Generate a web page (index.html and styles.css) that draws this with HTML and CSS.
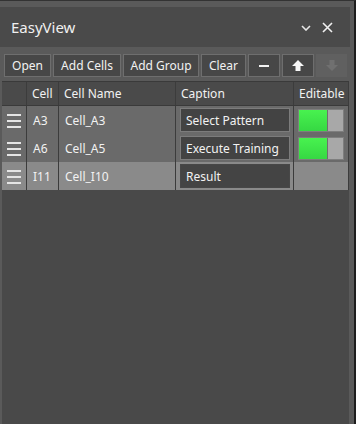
FILE: index.html
```html
<!DOCTYPE html>
<html>
<head>
<meta charset="utf-8">
<link rel="stylesheet" href="styles.css">
</head>
<body>
<div class="panel">
  <div class="titlebar">
    <span class="title">EasyView</span>
    <span class="spacer"></span>
    <svg class="chev" width="10" height="6" viewBox="0 0 10 6"><polyline points="1,1 5,5 9,1" fill="none" stroke="#e6e6e6" stroke-width="1.6"/></svg>
    <svg class="close" width="11" height="11" viewBox="0 0 11 11"><path d="M1 1 L10 10 M10 1 L1 10" stroke="#f0f0f0" stroke-width="1.6"/></svg>
  </div>
  <div class="toolbar">
    <button class="btn w-open">Open</button>
    <button class="btn w-cells">Add Cells</button>
    <button class="btn w-group">Add Group</button>
    <button class="btn w-clear">Clear</button>
    <button class="btn w-icon"><svg width="10" height="2" viewBox="0 0 10 2"><rect width="10" height="2" fill="#f2f2f2"/></svg></button>
    <button class="btn w-icon"><svg width="12" height="11" viewBox="0 0 12 11"><polygon points="6,0 12,6 8.5,6 8.5,11 3.5,11 3.5,6 0,6" fill="#f8f8f8"/></svg></button>
    <button class="btn w-icon2 disabled"><svg width="12" height="11" viewBox="0 0 12 11"><polygon points="6,11 12,5 8.5,5 8.5,0 3.5,0 3.5,5 0,5" fill="#707070"/></svg></button>
  </div>
  <div class="table">
    <div class="row head">
      <div class="c"></div>
      <div class="c">Cell</div>
      <div class="c">Cell Name</div>
      <div class="c">Caption</div>
      <div class="c">Editable</div>
    </div>
    <div class="row">
      <div class="c handle"><span></span><span></span><span></span></div>
      <div class="c val">A3</div>
      <div class="c val">Cell_A3</div>
      <div class="c box-cell"><div class="box">Select Pattern</div></div>
      <div class="c tog-cell"><div class="toggle"><div class="on"></div><div class="knob"></div></div></div>
    </div>
    <div class="row">
      <div class="c handle"><span></span><span></span><span></span></div>
      <div class="c val">A6</div>
      <div class="c val">Cell_A5</div>
      <div class="c box-cell"><div class="box">Execute Training</div></div>
      <div class="c tog-cell"><div class="toggle"><div class="on"></div><div class="knob"></div></div></div>
    </div>
    <div class="row sel">
      <div class="c handle"><span></span><span></span><span></span></div>
      <div class="c val">I11</div>
      <div class="c val">Cell_I10</div>
      <div class="c box-cell"><div class="box plain">Result</div></div>
      <div class="c"></div>
    </div>
  </div>
</div>
</body>
</html>
```
FILE: styles.css
```css
html, body {
  margin: 0;
  padding: 0;
}
body {
  width: 356px;
  height: 424px;
  overflow: hidden;
  font-family: "Noto Sans", "Open Sans", sans-serif;
  color: #f2f2f2;
}
.panel {
  box-sizing: border-box;
  width: 356px;
  height: 424px;
  background: #5a5a5a;
  border-top: 1px solid #333333;
  border-right: 2px solid #1e1e1e;
  display: flex;
  flex-direction: column;
}
.titlebar {
  margin-top: 6px;
  margin-right: 4px;
  height: 40px;
  background: #4a4a4a;
  display: flex;
  align-items: center;
  padding-left: 11px;
  padding-right: 17px;
}
.title {
  font-size: 15px;
  color: #f0f0f0;
}
.spacer { flex: 1; }
.chev { margin-right: 11px; margin-top: 1px; }
.close { margin-top: 0; }
.toolbar {
  display: flex;
  gap: 2px;
  padding: 7px 0 4px 4px;
}
.btn {
  box-sizing: border-box;
  height: 23px;
  border: 1px solid #6e6e6e;
  background: #474747;
  color: #f2f2f2;
  font-family: "Noto Sans", "Open Sans", sans-serif;
  font-size: 12px;
  padding: 0;
  display: flex;
  align-items: center;
  justify-content: center;
}
.w-open { width: 47px; }
.w-cells { width: 68px; }
.w-group { width: 76px; }
.w-clear { width: 45px; }
.w-icon { width: 32px; }
.w-icon2 { width: 31px; }
.btn.disabled {
  background: #606060;
  border-color: #606060;
}
.table {
  flex: 1;
  margin: 0 5px 0 2px;
  background: #494949;
  font-size: 12px;
}
.row {
  display: grid;
  grid-template-columns: 24px 31px 116px 117px 54px;
  column-gap: 1px;
  background: #3c3c3c;
  border-right: 1px solid #3c3c3c;
  height: 28px;
}
.row.head {
  height: 23px;
  border-top: 1px solid #3a3a3a;
  border-bottom: 1px solid #3a3a3a;
}
.c {
  background: #6a6a6a;
  display: flex;
  align-items: center;
  padding-left: 6px;
  min-width: 0;
  white-space: nowrap;
}
.head .c {
  background: #4a4a4a;
  padding-left: 5px;
}
.row.sel .c { background: #8a8a8a; }
.handle {
  flex-direction: column;
  justify-content: center;
  align-items: flex-start;
  gap: 4px;
  padding-left: 5px;
  padding-top: 1px;
}
.handle span {
  display: block;
  width: 14px;
  height: 2px;
  background: #e4e4e4;
}
.box-cell { padding-left: 4px; }
.box {
  box-sizing: border-box;
  width: 110px;
  height: 24px;
  border: 1px solid #7c7c7c;
  background: #434343;
  padding-left: 5px;
  display: flex;
  align-items: center;
}
.box.plain {
  border-color: #474747;
  background: #444444;
}
.tog-cell { padding-left: 4px; }
.toggle {
  box-sizing: border-box;
  width: 46px;
  height: 23px;
  border: 1px solid #7e7e7e;
  display: flex;
  margin-top: 1px;
}
.toggle .on {
  width: 28px;
  background: linear-gradient(#48f24f, #36d843);
  border-right: 1px solid #6e6e6e;
}
.toggle .knob {
  flex: 1;
  background: #a8a8a8;
}
```
